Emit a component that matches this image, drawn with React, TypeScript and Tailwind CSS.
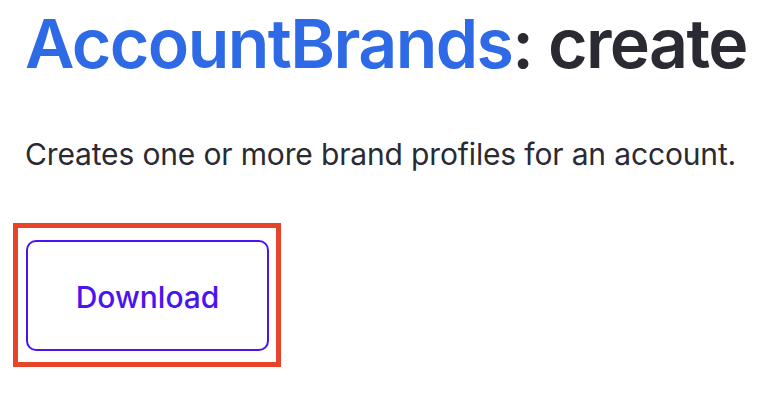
export default function App() {
  return (
    <div className="w-[776px] h-[400px] bg-white overflow-hidden" style={{ fontFamily: 'Inter, "Noto Sans", sans-serif' }}>
      <div className="pl-[25px] pt-[3px]">
        <h1 className="text-[68px] leading-[80px] font-semibold tracking-[-1.6px] whitespace-nowrap">
          <span className="text-[#2f6ae6]">AccountBrands</span>
          <span className="text-[#2a2a32]">: create</span>
        </h1>
      </div>
      <p className="pl-[25px] mt-[53px] text-[30px] leading-[36px] text-[#2a2a32] tracking-[-0.15px] whitespace-nowrap">
        Creates one or more brand profiles for an account.
      </p>
      <div className="ml-[13px] mt-[51px] w-[268px] h-[144px] border-[5px] border-[#e8442a] pl-[8px] pt-[12px]">
        <button className="w-[243px] h-[111px] rounded-[10px] border-2 border-[#4a14f2] text-[#4a14f2] text-[30px] font-medium flex items-center justify-center pt-[3px]">
          Download
        </button>
      </div>
    </div>
  );
}
